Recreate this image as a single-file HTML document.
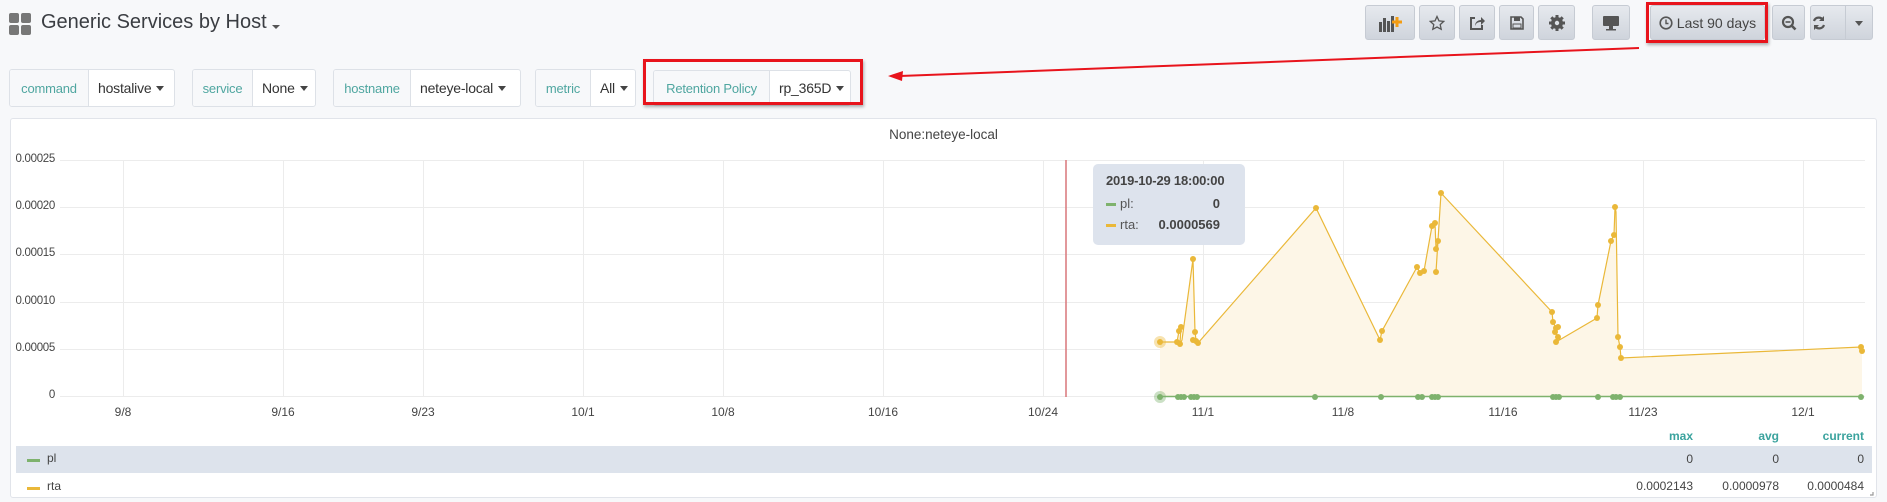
<!DOCTYPE html>
<html><head><meta charset="utf-8"><style>
*{box-sizing:border-box;margin:0;padding:0}
body{width:1887px;height:502px;background:#f7f8fa;font-family:"Liberation Sans",sans-serif;position:relative;overflow:hidden;color:#333}
.abs{position:absolute}
.title{left:41px;top:11px;font-size:20px;color:#3a3d42;white-space:nowrap}
.vb{position:absolute;top:69px;height:38px;border:1px solid #dde1e7;border-radius:3px;background:#fff;display:flex;font-size:13px;white-space:nowrap;overflow:hidden}
.vb .l{background:#f7f8fa;color:#4fa6a0;border-right:1px solid #dde1e7;display:flex;align-items:center;justify-content:center;padding:0 4px;flex:none;letter-spacing:-0.2px}
.vb .v{display:flex;align-items:center;padding:0 6px 0 9px;color:#333;font-size:14px;letter-spacing:-0.2px}
.car{display:inline-block;width:0;height:0;border-left:4px solid transparent;border-right:4px solid transparent;border-top:5px solid #444;margin-left:5px}
.btn{position:absolute;top:5px;height:35px;background:linear-gradient(#e6e9ee,#cfd4dc);border:1px solid #c6cbd3;border-radius:3px;display:flex;align-items:center;justify-content:center;color:#555;white-space:nowrap}
.panel{left:10px;top:118px;width:1867px;height:380px;background:#fff;border:1px solid #e1e4ea;border-radius:3px}
.yl{position:absolute;left:0;width:55px;text-align:right;font-size:11.5px;color:#444;letter-spacing:-0.3px}
.xl{position:absolute;top:405px;font-size:12px;color:#444;width:60px;margin-left:-30px;text-align:center}
.lg{font-size:12px;color:#444}
.hd{position:absolute;top:429px;font-size:12px;color:#3ba39e;font-weight:bold;text-align:right;width:80px}
</style></head><body>
<svg class="abs" style="left:9px;top:13px" width="22" height="22"><rect x="0" y="0" width="10" height="10" rx="2" fill="#777"/><rect x="12" y="0" width="10" height="10" rx="2" fill="#777"/><rect x="0" y="12" width="10" height="10" rx="2" fill="#777"/><rect x="12" y="12" width="10" height="10" rx="2" fill="#777"/></svg>
<div class="abs title">Generic Services by Host</div>
<div class="abs" style="left:272px;top:25px;width:0;height:0;border-left:4px solid transparent;border-right:4px solid transparent;border-top:4px solid #555"></div>

<div class="vb" style="left:9px;width:166px"><div class="l" style="width:79px">command</div><div class="v">hostalive<span class="car"></span></div></div>
<div class="vb" style="left:192px;width:124px"><div class="l" style="width:60px">service</div><div class="v">None<span class="car"></span></div></div>
<div class="vb" style="left:333px;width:188px"><div class="l" style="width:77px">hostname</div><div class="v">neteye-local<span class="car"></span></div></div>
<div class="vb" style="left:535px;width:101px"><div class="l" style="width:55px">metric</div><div class="v">All<span class="car"></span></div></div>
<div class="vb" style="left:653px;width:198px;height:36px;top:70px"><div class="l" style="width:116px">Retention Policy</div><div class="v">rp_365D<span class="car"></span></div></div>
<div class="abs" style="left:643px;top:59px;width:220px;height:46px;border:3px solid #e8141c;box-shadow:1px 2px 3px rgba(0,0,0,.3)"></div>

<div class="btn" style="left:1365px;width:50px"><svg width="26" height="18"><rect x="2" y="8" width="3" height="10" fill="#555"/><rect x="6" y="4" width="3" height="14" fill="#555"/><rect x="10" y="7" width="3" height="11" fill="#555"/><rect x="14" y="2" width="3" height="16" fill="#555"/><path d="M20 3v10M15 8h10" stroke="#f39c12" stroke-width="3"/></svg></div>
<div class="btn" style="left:1419px;width:36px"><svg width="16" height="16"><path d="M8 1.5l2 4.4 4.7.5-3.5 3.2 1 4.7L8 12l-4.2 2.3 1-4.7L1.3 6.4 6 5.9z" fill="none" stroke="#555" stroke-width="1.3"/></svg></div>
<div class="btn" style="left:1459px;width:36px"><svg width="16" height="16"><path d="M6 3H2v11h11v-4" fill="none" stroke="#555" stroke-width="2"/><path d="M6 11c0-4 3-6 6-6V2l4 4-4 4V7c-3 0-5 1-6 4z" fill="#555"/></svg></div>
<div class="btn" style="left:1499px;width:35px"><svg width="16" height="16"><path d="M2 2h10l2 2v10H2z" fill="none" stroke="#555" stroke-width="1.6"/><rect x="5" y="2" width="6" height="4" fill="#555"/><rect x="4" y="9" width="8" height="4" fill="none" stroke="#555"/></svg></div>
<div class="btn" style="left:1538px;width:37px"><svg width="18" height="18"><circle cx="9" cy="9" r="6" fill="#555"/><g stroke="#555" stroke-width="3"><path d="M9 1v16M1 9h16M3.3 3.3l11.4 11.4M14.7 3.3L3.3 14.7"/></g><circle cx="9" cy="9" r="2.2" fill="#dde1e6"/></svg></div>
<div class="btn" style="left:1592px;width:38px"><svg width="18" height="16"><rect x="1" y="1" width="16" height="10" rx="1" fill="#555"/><rect x="7" y="11" width="4" height="3" fill="#555"/><rect x="4" y="14" width="10" height="1.5" fill="#555"/></svg></div>
<div class="btn" style="left:1650px;width:115px;font-size:14px;color:#444"><svg width="14" height="14" style="margin-right:4px"><circle cx="7" cy="7" r="5.8" fill="none" stroke="#555" stroke-width="1.6"/><path d="M7 3.5V7.5H9.5" fill="none" stroke="#555" stroke-width="1.4"/></svg>Last 90 days</div>
<div class="abs" style="left:1646px;top:2px;width:122px;height:41px;border:3px solid #e8141c;box-shadow:1px 2px 3px rgba(0,0,0,.3)"></div>
<div class="btn" style="left:1772px;width:33px"><svg width="16" height="16"><circle cx="7" cy="7" r="5" fill="none" stroke="#555" stroke-width="2.2"/><path d="M10.5 10.5l4 4" stroke="#555" stroke-width="2.6"/><path d="M4.5 7h5" stroke="#555" stroke-width="1.6"/></svg></div>
<div class="btn" style="left:1810px;width:63px;justify-content:flex-start"><svg width="34" height="16"><path d="M3 6a5 5 0 0 1 9-1M13 10a5 5 0 0 1-9 1" fill="none" stroke="#555" stroke-width="2.2"/><path d="M13 1v5H8zM3 15v-5h5z" fill="#555"/></svg><span style="position:absolute;left:34px;top:0;height:33px;border-left:1px solid #c6cbd3"></span><span style="position:absolute;left:44px;top:15px;border-left:4px solid transparent;border-right:4px solid transparent;border-top:5px solid #555"></span></div>

<div class="abs panel"></div>
<div class="abs" style="left:10px;top:127px;width:1867px;text-align:center;font-size:13.5px;color:#444">None:neteye-local</div>

<div class="yl" style="top:153px">0.00025</div>
<div class="yl" style="top:200px">0.00020</div>
<div class="yl" style="top:247px">0.00015</div>
<div class="yl" style="top:295px">0.00010</div>
<div class="yl" style="top:342px">0.00005</div>
<div class="yl" style="top:389px">0</div>

<svg class="abs" style="left:0;top:0" width="1887" height="502">
<g stroke="#ececec" stroke-width="1">
<path d="M60 160.5H1865M60 207.5H1865M60 254.5H1865M60 302.5H1865M60 349.5H1865M60 396.5H1865"/>
<path d="M123.5 160V397M283.5 160V397M423.5 160V397M583.5 160V397M723.5 160V397M883.5 160V397M1043.5 160V397M1203.5 160V397M1343.5 160V397M1503.5 160V397M1643.5 160V397M1803.5 160V397"/>
</g>
<polygon fill="#fdf6e7" points="1160,342 1177,342 1179,331 1181,327 1180,344 1182,340 1193,259 1195,332 1196,340 1198,343 1316,208 1380,340 1382,331 1417,267 1420,273 1424,271 1432,226 1435,223 1436,249 1438,241 1436,272 1441,193 1552,312 1553,322 1556,328 1558,327 1555,332 1558,337 1556,342 1597,318 1598,305 1611,241 1614,235 1615,207 1616,212 1618,337 1620,347 1621,358 1861,347 1862,351 1862,397 1160,397"/>
<path d="M1066 160V397" stroke="#d9777a" stroke-width="1.5"/>
<polyline fill="none" stroke="#eab839" stroke-width="1.2" points="1160,342 1177,342 1179,331 1181,327 1180,344 1182,340 1193,259 1195,332 1196,340 1198,343 1316,208 1380,340 1382,331 1417,267 1420,273 1424,271 1432,226 1435,223 1436,249 1438,241 1436,272 1441,193 1552,312 1553,322 1556,328 1558,327 1555,332 1558,337 1556,342 1597,318 1598,305 1611,241 1614,235 1615,207 1616,212 1618,337 1620,347 1621,358 1861,347 1862,351"/>
<g fill="#eab839">
<circle cx="1160" cy="342" r="6" opacity=".4"/>
<circle cx="1160" cy="342" r="3"/><circle cx="1177" cy="342" r="3"/><circle cx="1179" cy="331" r="3"/><circle cx="1181" cy="327" r="3"/><circle cx="1180" cy="344" r="3"/><circle cx="1193" cy="259" r="3"/><circle cx="1195" cy="332" r="3"/><circle cx="1193" cy="340" r="3"/><circle cx="1196" cy="341" r="3"/><circle cx="1198" cy="343" r="3"/><circle cx="1316" cy="208" r="3"/><circle cx="1380" cy="340" r="3"/><circle cx="1382" cy="331" r="3"/><circle cx="1417" cy="267" r="3"/><circle cx="1420" cy="273" r="3"/><circle cx="1424" cy="271" r="3"/><circle cx="1432" cy="226" r="3"/><circle cx="1435" cy="223" r="3"/><circle cx="1436" cy="249" r="3"/><circle cx="1438" cy="241" r="3"/><circle cx="1436" cy="272" r="3"/><circle cx="1441" cy="193" r="3"/><circle cx="1552" cy="312" r="3"/><circle cx="1553" cy="322" r="3"/><circle cx="1556" cy="328" r="3"/><circle cx="1558" cy="327" r="3"/><circle cx="1555" cy="332" r="3"/><circle cx="1558" cy="337" r="3"/><circle cx="1556" cy="342" r="3"/><circle cx="1597" cy="318" r="3"/><circle cx="1598" cy="305" r="3"/><circle cx="1611" cy="241" r="3"/><circle cx="1614" cy="235" r="3"/><circle cx="1615" cy="207" r="3"/><circle cx="1618" cy="337" r="3"/><circle cx="1620" cy="347" r="3"/><circle cx="1621" cy="358" r="3"/><circle cx="1861" cy="347" r="3"/><circle cx="1862" cy="351" r="3"/>
</g>
<path d="M1160 396.5H1862" stroke="#7eb26d" stroke-width="1.5"/>
<g fill="#7eb26d">
<circle cx="1160" cy="397" r="6" opacity=".4"/>
<circle cx="1160" cy="397" r="3"/><circle cx="1178" cy="397" r="3"/><circle cx="1181" cy="397" r="3"/><circle cx="1184" cy="397" r="3"/><circle cx="1191" cy="397" r="3"/><circle cx="1194" cy="397" r="3"/><circle cx="1197" cy="397" r="3"/><circle cx="1315" cy="397" r="3"/><circle cx="1381" cy="397" r="3"/><circle cx="1418" cy="397" r="3"/><circle cx="1422" cy="397" r="3"/><circle cx="1432" cy="397" r="3"/><circle cx="1435" cy="397" r="3"/><circle cx="1438" cy="397" r="3"/><circle cx="1553" cy="397" r="3"/><circle cx="1556" cy="397" r="3"/><circle cx="1559" cy="397" r="3"/><circle cx="1598" cy="397" r="3"/><circle cx="1613" cy="397" r="3"/><circle cx="1616" cy="397" r="3"/><circle cx="1620" cy="397" r="3"/><circle cx="1861" cy="397" r="3"/>
</g>
<path d="M1639 48L900 76" stroke="#e8141c" stroke-width="2"/>
<path d="M888 76L903 71L902 81z" fill="#e8141c"/>
<path d="M1870 495h3v-3" stroke="#999" stroke-width="1.2" fill="none"/>
</svg>

<div class="xl" style="left:123px">9/8</div><div class="xl" style="left:283px">9/16</div><div class="xl" style="left:423px">9/23</div><div class="xl" style="left:583px">10/1</div><div class="xl" style="left:723px">10/8</div><div class="xl" style="left:883px">10/16</div><div class="xl" style="left:1043px">10/24</div><div class="xl" style="left:1203px">11/1</div><div class="xl" style="left:1343px">11/8</div><div class="xl" style="left:1503px">11/16</div><div class="xl" style="left:1643px">11/23</div><div class="xl" style="left:1803px">12/1</div>

<div class="abs" style="left:1093px;top:164px;width:152px;height:81px;background:#dde3ed;border-radius:5px"></div>
<div class="abs" style="left:1106px;top:173px;font-size:13px;font-weight:bold;color:#444;letter-spacing:-0.2px">2019-10-29 18:00:00</div>
<div class="abs" style="left:1106px;top:203px;width:10px;height:3px;background:#7eb26d"></div>
<div class="abs" style="left:1120px;top:196px;font-size:13px;color:#555">pl:</div>
<div class="abs" style="left:1160px;top:196px;width:60px;text-align:right;font-size:13px;font-weight:bold;color:#444">0</div>
<div class="abs" style="left:1106px;top:224px;width:10px;height:3px;background:#eab839"></div>
<div class="abs" style="left:1120px;top:217px;font-size:13px;color:#555">rta:</div>
<div class="abs" style="left:1140px;top:217px;width:80px;text-align:right;font-size:13px;font-weight:bold;color:#444">0.0000569</div>

<div class="hd" style="left:1613px">max</div><div class="hd" style="left:1699px">avg</div><div class="hd" style="left:1784px">current</div>
<div class="abs" style="left:16px;top:446px;width:1856px;height:27px;background:#dde3ec"></div>
<div class="abs" style="left:27px;top:459px;width:13px;height:3px;background:#7eb26d"></div>
<div class="abs lg" style="left:47px;top:451px">pl</div>
<div class="abs lg" style="left:1613px;top:452px;width:80px;text-align:right">0</div>
<div class="abs lg" style="left:1699px;top:452px;width:80px;text-align:right">0</div>
<div class="abs lg" style="left:1784px;top:452px;width:80px;text-align:right">0</div>
<div class="abs" style="left:27px;top:487px;width:13px;height:3px;background:#eab839"></div>
<div class="abs lg" style="left:47px;top:479px">rta</div>
<div class="abs lg" style="left:1593px;top:479px;width:100px;text-align:right">0.0002143</div>
<div class="abs lg" style="left:1679px;top:479px;width:100px;text-align:right">0.0000978</div>
<div class="abs lg" style="left:1764px;top:479px;width:100px;text-align:right">0.0000484</div>
</body></html>
